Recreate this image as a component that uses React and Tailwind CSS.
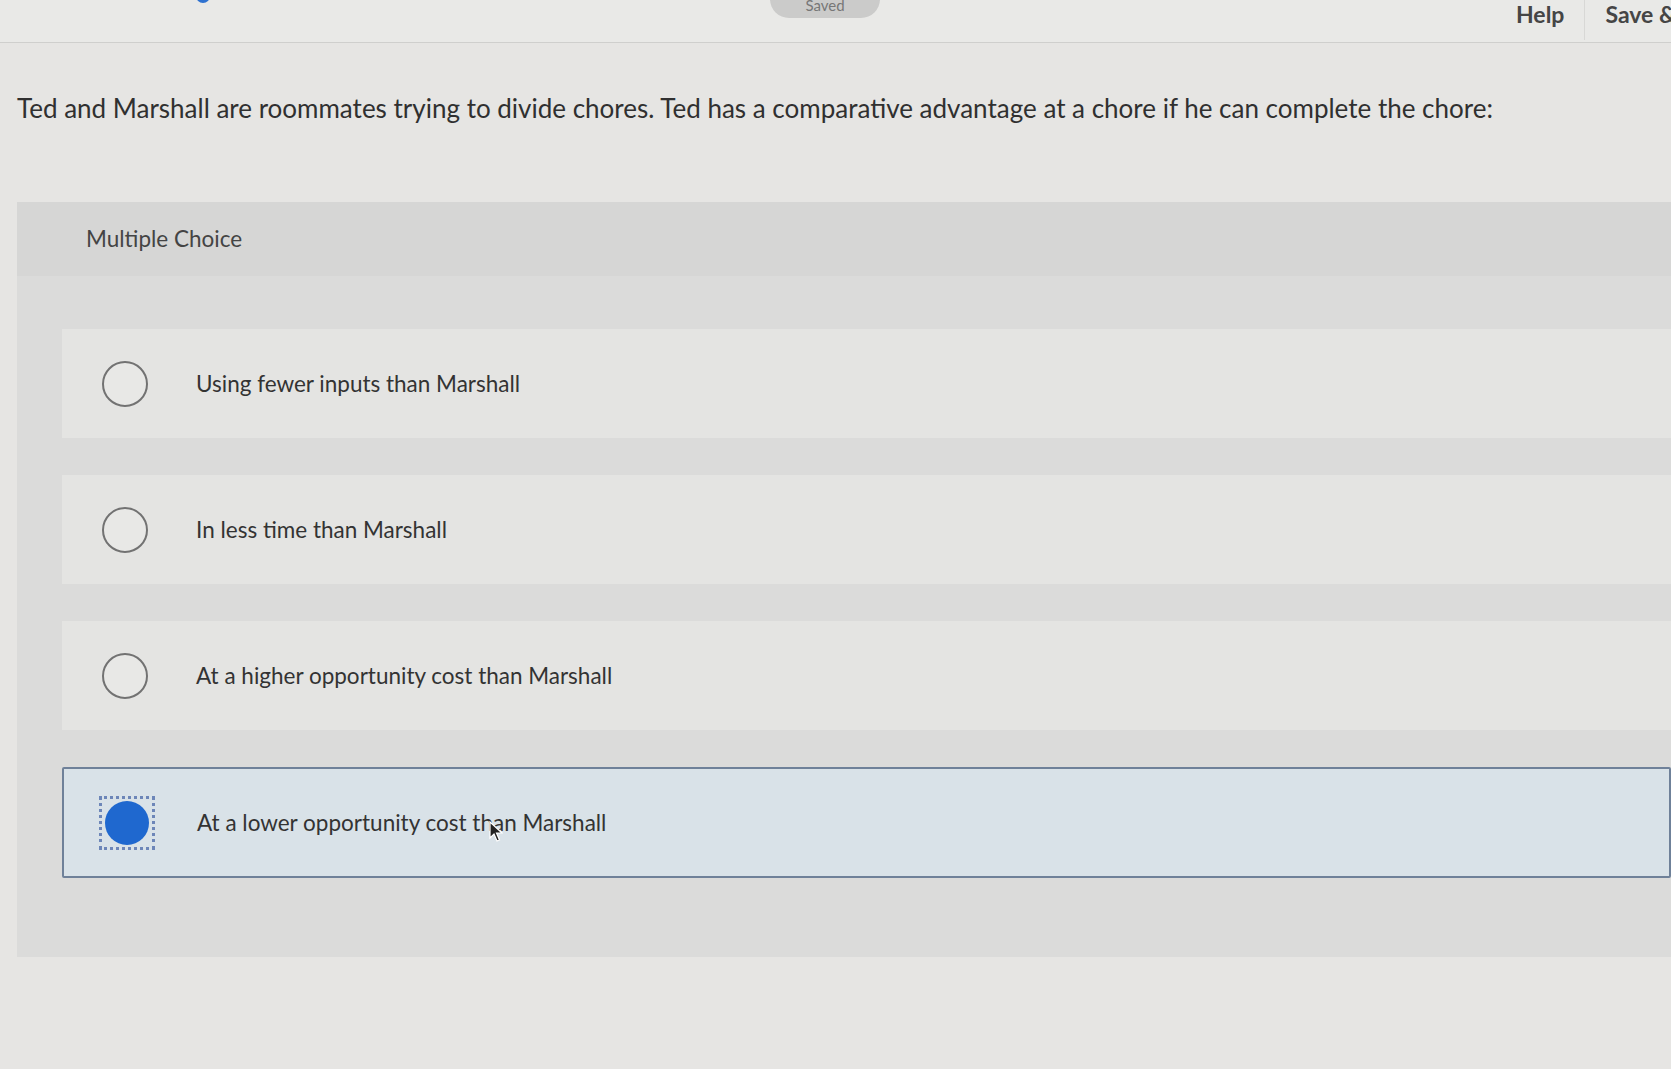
import React from 'react';

const options = [
  { id: 'a', text: 'Using fewer inputs than Marshall' },
  { id: 'b', text: 'In less time than Marshall' },
  { id: 'c', text: 'At a higher opportunity cost than Marshall' },
  { id: 'd', text: 'At a lower opportunity cost than Marshall', selected: true },
];

function Cursor() {
  return (
    <svg width="14" height="22" viewBox="0 0 14 22" className="absolute left-[-4px] top-[12px]">
      <path d="M1 1 L1 17 L5 13 L8 20 L10.5 19 L7.5 12 L13 12 Z" fill="#222" stroke="#fff" strokeWidth="1.2" />
    </svg>
  );
}

function Option({ text, selected }) {
  return (
    <div
      className={
        selected
          ? 'h-[111px] flex items-center pl-[35px] bg-[#d9e2e8] border-2 border-[#6f8199] rounded-[2px]'
          : 'h-[109px] flex items-center pl-[40px] bg-[#e4e4e2]'
      }
    >
      {selected ? (
        <div className="w-[56px] h-[54px] border-[3px] border-dotted border-[#6d86b8] flex items-center justify-center">
          <div className="w-[44px] h-[44px] rounded-full bg-[#1f68cf]" />
        </div>
      ) : (
        <div className="w-[46px] h-[46px] rounded-full border-2 border-[#727272] bg-[#e8e8e6]" />
      )}
      <span className={selected ? 'ml-[42px] text-[22.5px] text-[#333]' : 'ml-[48px] text-[22.5px] text-[#333]'}>
        {selected ? (
          <>
            At a lower opportunity cost th
            <span className="relative">
              a<Cursor />
            </span>
            n Marshall
          </>
        ) : (
          text
        )}
      </span>
    </div>
  );
}

export default function App() {
  return (
    <div className="min-h-screen bg-[#e6e5e3] overflow-hidden" style={{ fontFamily: 'Lato, "Open Sans", sans-serif' }}>
      <header className="h-[43px] border-b border-[#cfcfcd] flex items-start bg-[#e9e9e7] overflow-hidden">
        <div className="w-[196px] flex-none" />
        <div className="w-[14px] h-[14px] flex-none rounded-full bg-[#2f72d0] -mt-[11px]" />
        <div className="w-[560px] flex-none" />
        <div className="w-[110px] h-[38px] flex-none -mt-[20px] rounded-full bg-[#cbcbca] flex items-end justify-center pb-[2px] text-[15px] text-[#777]">
          Saved
        </div>
        <div className="w-[636px] flex-none" />
        <div className="flex-none text-[23px] font-bold text-[#454545] -mt-[3px]">Help</div>
        <div className="flex-none w-px h-[40px] bg-[#d8d8d6] mx-[20px]" />
        <div className="flex-none text-[23px] font-bold text-[#454545] -mt-[3px] whitespace-nowrap">Save &amp; Exit</div>
      </header>

      <p className="pl-[17px] pt-[46px] text-[26px] text-[#303030] whitespace-nowrap">
        Ted and Marshall are roommates trying to divide chores. Ted has a comparative advantage at a chore if he can complete the chore:
      </p>

      <section className="mt-[74px] ml-[17px] bg-[#dbdbda] pb-[79px]">
        <div className="h-[74px] bg-[#d6d6d5] flex items-center pl-[69px] text-[22.5px] text-[#444]">
          Multiple Choice
        </div>
        <div className="pl-[45px] pt-[53px] flex flex-col gap-[37px]">
          {options.map((o) => (
            <Option key={o.id} text={o.text} selected={o.selected} />
          ))}
        </div>
      </section>
    </div>
  );
}
